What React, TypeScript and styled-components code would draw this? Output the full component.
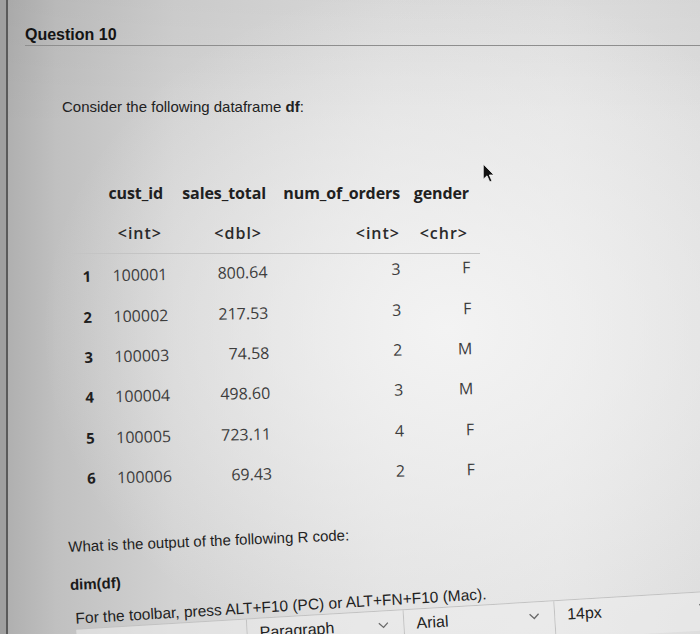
import React from 'react';
import styled, { createGlobalStyle } from 'styled-components';

const GlobalStyle = createGlobalStyle`
  html, body {
    margin: 0;
    padding: 0;
    width: 700px;
    height: 634px;
    overflow: hidden;
  }
`;

type Cell = { text: string; pad?: number };

const headers: Cell[] = [
  { text: '' },
  { text: 'cust_id', pad: 7 },
  { text: 'sales_total', pad: 14 },
  { text: 'num_of_orders', pad: 4 },
  { text: 'gender', pad: 3 },
];

const types: Cell[] = [
  { text: '' },
  { text: '<int>', pad: 8 },
  { text: '<dbl>', pad: 18 },
  { text: '<int>', pad: 4 },
  { text: '<chr>', pad: 4 },
];

const rows = [
  ['100001', '800.64', '3', 'F'],
  ['100002', '217.53', '3', 'F'],
  ['100003', '74.58', '2', 'M'],
  ['100004', '498.60', '3', 'M'],
  ['100005', '723.11', '4', 'F'],
  ['100006', '69.43', '2', 'F'],
];

const App: React.FC = () => {
  return (
    <>
      <GlobalStyle />
      <Screen>
        <LeftEdge />
        <Main>
          <QuestionTitle>Question 10</QuestionTitle>
          <Prompt>
            Consider the following dataframe <b>df</b>:
          </Prompt>

          <Frame>
            <HeadRow>
              {headers.map((h, i) => (
                <HeadCell key={i} $pad={h.pad ?? 0}>{h.text}</HeadCell>
              ))}
            </HeadRow>
            <TypeRow>
              {types.map((t, i) => (
                <TypeCell key={i} $pad={t.pad ?? 0}>{t.text}</TypeCell>
              ))}
            </TypeRow>
            <Body>
              {rows.map((r, i) => (
                <DataRow key={i}>
                  <IndexCell>{i + 1}</IndexCell>
                  <ValueCell $align="left" $pad={16}>{r[0]}</ValueCell>
                  <ValueCell $align="right" $pad={13}>{r[1]}</ValueCell>
                  <ValueCell $align="right" $pad={4}>{r[2]}</ValueCell>
                  <ValueCell $align="right" $pad={2}>{r[3]}</ValueCell>
                </DataRow>
              ))}
            </Body>
          </Frame>

          <Footer>
            <Question>What is the output of the following R code:</Question>
            <Code>dim(df)</Code>
            <Controls>
              <Hint>For the toolbar, press ALT+F10 (PC) or ALT+FN+F10 (Mac).</Hint>
              <Toolbar>
                <ToolBox $width={171} />
                <ToolBox $width={157}>
                  <span>Paragraph</span>
                  <Chevron />
                </ToolBox>
                <ToolBox $width={151}>
                  <span>Arial</span>
                  <Chevron />
                </ToolBox>
                <ToolBox $width={170}>
                  <span>14px</span>
                  <Chevron />
                </ToolBox>
              </Toolbar>
            </Controls>
          </Footer>
        </Main>
        <Cursor viewBox="0 0 12 19">
          <path d="M1 1 L1 15.5 L4.6 12.2 L7.2 18 L9.3 17.1 L6.8 11.4 L11.2 11.4 Z" fill="#111" stroke="#f4f4f4" strokeWidth="0.8" />
        </Cursor>
      </Screen>
    </>
  );
};

const Chevron: React.FC = () => (
  <ChevronSvg viewBox="0 0 12 8">
    <path d="M1.5 1.5 L6 6 L10.5 1.5" fill="none" stroke="#6a6a6a" strokeWidth="1.3" />
  </ChevronSvg>
);

const Screen = styled.div`
  position: relative;
  width: 700px;
  height: 634px;
  display: flex;
  overflow: hidden;
  background:
    radial-gradient(ellipse 58% 55% at 64% 52%, rgba(244, 244, 244, 0.95), rgba(244, 244, 244, 0) 100%),
    linear-gradient(to bottom, rgba(0, 0, 0, 0.04), rgba(0, 0, 0, 0) 20%),
    linear-gradient(to right, #adadad 0%, #c0c0c0 8%, #d2d2d2 25%, #e0e0e0 55%, #e4e4e4 80%, #dedede 100%);
  font-family: 'Liberation Sans', Arial, sans-serif;
  color: #1c1c1c;
`;

const LeftEdge = styled.div`
  flex: 0 0 6px;
  background: #9f9f9f;
  border-right: 2px solid #5a5a5a;
`;

const Main = styled.div`
  flex: 1;
  display: flex;
  flex-direction: column;
  padding-left: 17px;
`;

const QuestionTitle = styled.div`
  margin-top: 25px;
  font-size: 16px;
  font-weight: 700;
  line-height: 19px;
  padding-bottom: 1px;
  border-bottom: 1px solid #8e8e8e;
  color: #141414;
`;

const Prompt = styled.div`
  margin: 52px 0 0 37px;
  font-size: 15px;
  line-height: 18px;
  color: #222;

  b {
    font-weight: 700;
  }
`;

const Frame = styled.div`
  margin: 57px 0 0 47px;
  width: 408px;
  padding: 0 8px 0 6px;
  box-sizing: border-box;
  font-family: 'Open Sans', 'Noto Sans', sans-serif;
`;

const grid = `
  display: grid;
  grid-template-columns: 18px 74px 110px 124px 68px;
  align-items: center;
`;

const HeadRow = styled.div`
  ${grid}
  height: 40px;
`;

const HeadCell = styled.div<{ $pad: number }>`
  text-align: right;
  padding-right: ${(p) => p.$pad}px;
  font-size: 16px;
  font-weight: 700;
  letter-spacing: -0.1px;
  color: #202020;
  white-space: nowrap;
`;

const TypeRow = styled.div`
  ${grid}
  height: 40px;
  margin: 0 -8px 0 -6px;
  padding: 0 8px 0 6px;
  border-bottom: 1px solid #c4c4c4;
`;

const TypeCell = styled.div<{ $pad: number }>`
  text-align: right;
  padding-right: ${(p) => p.$pad}px;
  font-size: 16px;
  font-weight: 600;
  letter-spacing: 1px;
  color: #2a2a2a;
  white-space: nowrap;
`;

const Body = styled.div`
  padding-top: 2px;
  transform: rotate(-1.3deg);
  transform-origin: left top;
`;

const DataRow = styled.div`
  ${grid}
  height: 40.4px;
`;

const IndexCell = styled.div`
  padding-left: 4px;
  font-size: 15px;
  font-weight: 700;
  color: #1f1f1f;
`;

const ValueCell = styled.div<{ $align: 'left' | 'right'; $pad: number }>`
  text-align: ${(p) => p.$align};
  ${(p) => (p.$align === 'left' ? `padding-left: ${p.$pad}px;` : `padding-right: ${p.$pad}px;`)}
  font-size: 16px;
  color: #3d3d3d;
  white-space: nowrap;
`;

const Footer = styled.div`
  margin: 40px 0 0 43px;
  display: flex;
  flex-direction: column;
  transform: rotate(-2.4deg);
  transform-origin: left top;
`;

const Question = styled.div`
  font-size: 15px;
  line-height: 18px;
  color: #1e1e1e;
`;

const Code = styled.div`
  margin-top: 20px;
  font-size: 15px;
  font-weight: 700;
  line-height: 18px;
  color: #1a1a1a;
`;

const Controls = styled.div`
  display: flex;
  flex-direction: column;
  margin-top: 16px;
  transform: rotate(-1deg);
  transform-origin: left top;
`;

const Hint = styled.div`
  margin-left: 4px;
  font-size: 15.5px;
  line-height: 18px;
  color: #222;
  white-space: nowrap;
`;

const Toolbar = styled.div`
  margin: 1px 0 0 4px;
  display: flex;
  width: 700px;
  border-top: 1px solid #c2c2c2;
`;

const ToolBox = styled.div<{ $width: number }>`
  flex: 0 0 ${(p) => p.$width}px;
  height: 38px;
  box-sizing: border-box;
  display: flex;
  align-items: flex-start;
  justify-content: space-between;
  padding: 5px 14px 0 12px;
  border-right: 1px solid #c2c2c2;
  background: rgba(236, 236, 236, 0.6);
  font-size: 16px;
  color: #222;
`;

const ChevronSvg = styled.svg`
  width: 12px;
  height: 8px;
  margin-top: 5px;
`;

const Cursor = styled.svg`
  position: absolute;
  left: 482px;
  top: 163px;
  width: 13px;
  height: 20px;
`;

export default App;
